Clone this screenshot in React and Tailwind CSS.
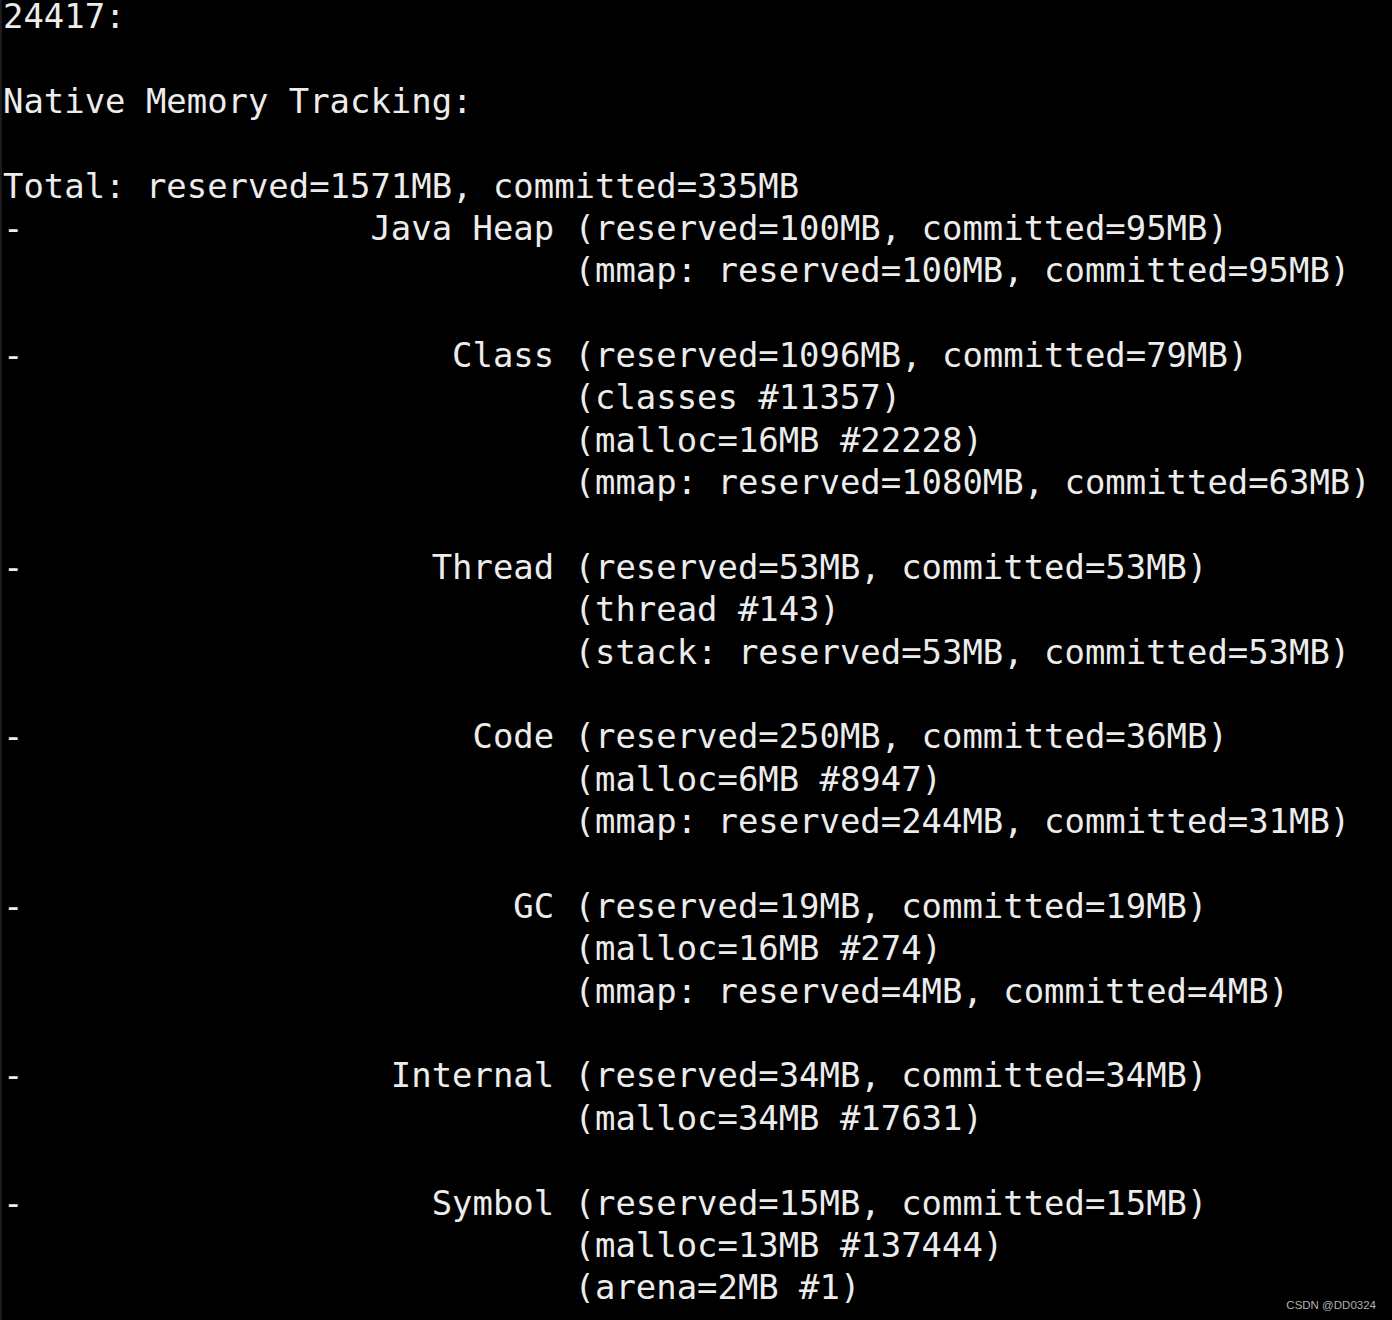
const SECTIONS = [
  {
    name: "Java Heap",
    lines: [
      "(reserved=100MB, committed=95MB)",
      "(mmap: reserved=100MB, committed=95MB)",
    ],
  },
  {
    name: "Class",
    lines: [
      "(reserved=1096MB, committed=79MB)",
      "(classes #11357)",
      "(malloc=16MB #22228)",
      "(mmap: reserved=1080MB, committed=63MB)",
    ],
  },
  {
    name: "Thread",
    lines: [
      "(reserved=53MB, committed=53MB)",
      "(thread #143)",
      "(stack: reserved=53MB, committed=53MB)",
    ],
  },
  {
    name: "Code",
    lines: [
      "(reserved=250MB, committed=36MB)",
      "(malloc=6MB #8947)",
      "(mmap: reserved=244MB, committed=31MB)",
    ],
  },
  {
    name: "GC",
    lines: [
      "(reserved=19MB, committed=19MB)",
      "(malloc=16MB #274)",
      "(mmap: reserved=4MB, committed=4MB)",
    ],
  },
  {
    name: "Internal",
    lines: ["(reserved=34MB, committed=34MB)", "(malloc=34MB #17631)"],
  },
  {
    name: "Symbol",
    lines: [
      "(reserved=15MB, committed=15MB)",
      "(malloc=13MB #137444)",
      "(arena=2MB #1)",
    ],
  },
];

// NMT style: "-" then the category right-aligned in 26 columns, then the details
function buildText() {
  const out = ["24417:", "", "Native Memory Tracking:", "", "Total: reserved=1571MB, committed=335MB"];
  SECTIONS.forEach((s, i) => {
    s.lines.forEach((l, j) => {
      if (j === 0) out.push("-" + s.name.padStart(26, " ") + " " + l);
      else out.push(" ".repeat(28) + l);
    });
    if (i < SECTIONS.length - 1) out.push("");
  });
  return out.join("\n");
}

export default function App() {
  return (
    <div className="relative w-[1392px] h-[1320px] bg-black overflow-hidden border-l-2 border-[#1c1c1c]">
      <pre className="m-0 mt-[-4px] pl-[1px] font-['DejaVu_Sans_Mono',monospace] text-[33.92px] leading-[42.37px] text-[#ececec]">
        {buildText()}
      </pre>
      <div className="absolute right-[16px] bottom-[6px] font-['Liberation_Sans',Arial,sans-serif] text-[11.5px] text-[#b0b0b0]">
        CSDN @DD0324
      </div>
    </div>
  );
}
